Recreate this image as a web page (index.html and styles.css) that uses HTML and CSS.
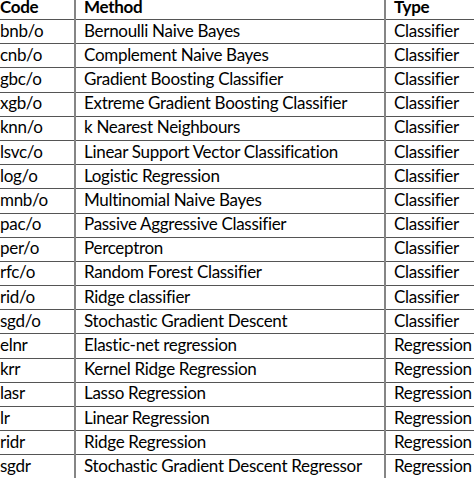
FILE: index.html
```html
<!DOCTYPE html>
<html>
<head>
<meta charset="utf-8">
<link rel="stylesheet" href="styles.css">
</head>
<body>
<div class="viewport">
<table class="grid">
<colgroup><col class="c-code"><col class="c-method"><col class="c-type"></colgroup>
<thead>
<tr><th>Code</th><th>Method</th><th>Type</th></tr>
</thead>
<tbody>
<tr><td>bnb/o</td><td>Bernoulli Naive Bayes</td><td>Classifier</td></tr>
<tr><td>cnb/o</td><td>Complement Naive Bayes</td><td>Classifier</td></tr>
<tr><td>gbc/o</td><td>Gradient Boosting Classifier</td><td>Classifier</td></tr>
<tr><td>xgb/o</td><td>Extreme Gradient Boosting Classifier</td><td>Classifier</td></tr>
<tr><td>knn/o</td><td>k Nearest Neighbours</td><td>Classifier</td></tr>
<tr><td>lsvc/o</td><td>Linear Support Vector Classification</td><td>Classifier</td></tr>
<tr><td>log/o</td><td>Logistic Regression</td><td>Classifier</td></tr>
<tr><td>mnb/o</td><td>Multinomial Naive Bayes</td><td>Classifier</td></tr>
<tr><td>pac/o</td><td>Passive Aggressive Classifier</td><td>Classifier</td></tr>
<tr><td>per/o</td><td>Perceptron</td><td>Classifier</td></tr>
<tr><td>rfc/o</td><td>Random Forest Classifier</td><td>Classifier</td></tr>
<tr><td>rid/o</td><td>Ridge classifier</td><td>Classifier</td></tr>
<tr><td>sgd/o</td><td>Stochastic Gradient Descent</td><td>Classifier</td></tr>
<tr><td>elnr</td><td>Elastic-net regression</td><td>Regression</td></tr>
<tr><td>krr</td><td>Kernel Ridge Regression</td><td>Regression</td></tr>
<tr><td>lasr</td><td>Lasso Regression</td><td>Regression</td></tr>
<tr><td>lr</td><td>Linear Regression</td><td>Regression</td></tr>
<tr><td>ridr</td><td>Ridge Regression</td><td>Regression</td></tr>
<tr><td>sgdr</td><td>Stochastic Gradient Descent Regressor</td><td>Regression</td></tr>
</tbody>
</table>
</div>
</body>
</html>
```
FILE: styles.css
```css
html, body {
  margin: 0;
  padding: 0;
  background: #fff;
}
.viewport {
  width: 474px;
  height: 478px;
  overflow: hidden;
}
.grid {
  margin-left: -10px;
  border-collapse: collapse;
  table-layout: fixed;
  width: 512px;
  font-family: Lato, "Open Sans", sans-serif;
  font-size: 17px;
  letter-spacing: -0.3px;
  color: #000;
}
.c-code { width: 84px; }
.c-method { width: 310px; }
.c-type { width: 118px; }
.grid th, .grid td {
  height: 24.2px;
  box-sizing: border-box;
  padding: 0 0 2px 8px;
  text-align: left;
  white-space: nowrap;
  overflow: hidden;
  border-top: 1px solid #555;
  border-bottom: 1px solid #555;
  border-left: 2px solid #858585;
  border-right: 2px solid #858585;
  line-height: 20px;
  vertical-align: middle;
}
.grid th {
  height: 19.5px;
  font-weight: 700;
  padding: 0 0 0 8px;
  border-top: 0;
  line-height: 14px;
  vertical-align: top;
}
```
